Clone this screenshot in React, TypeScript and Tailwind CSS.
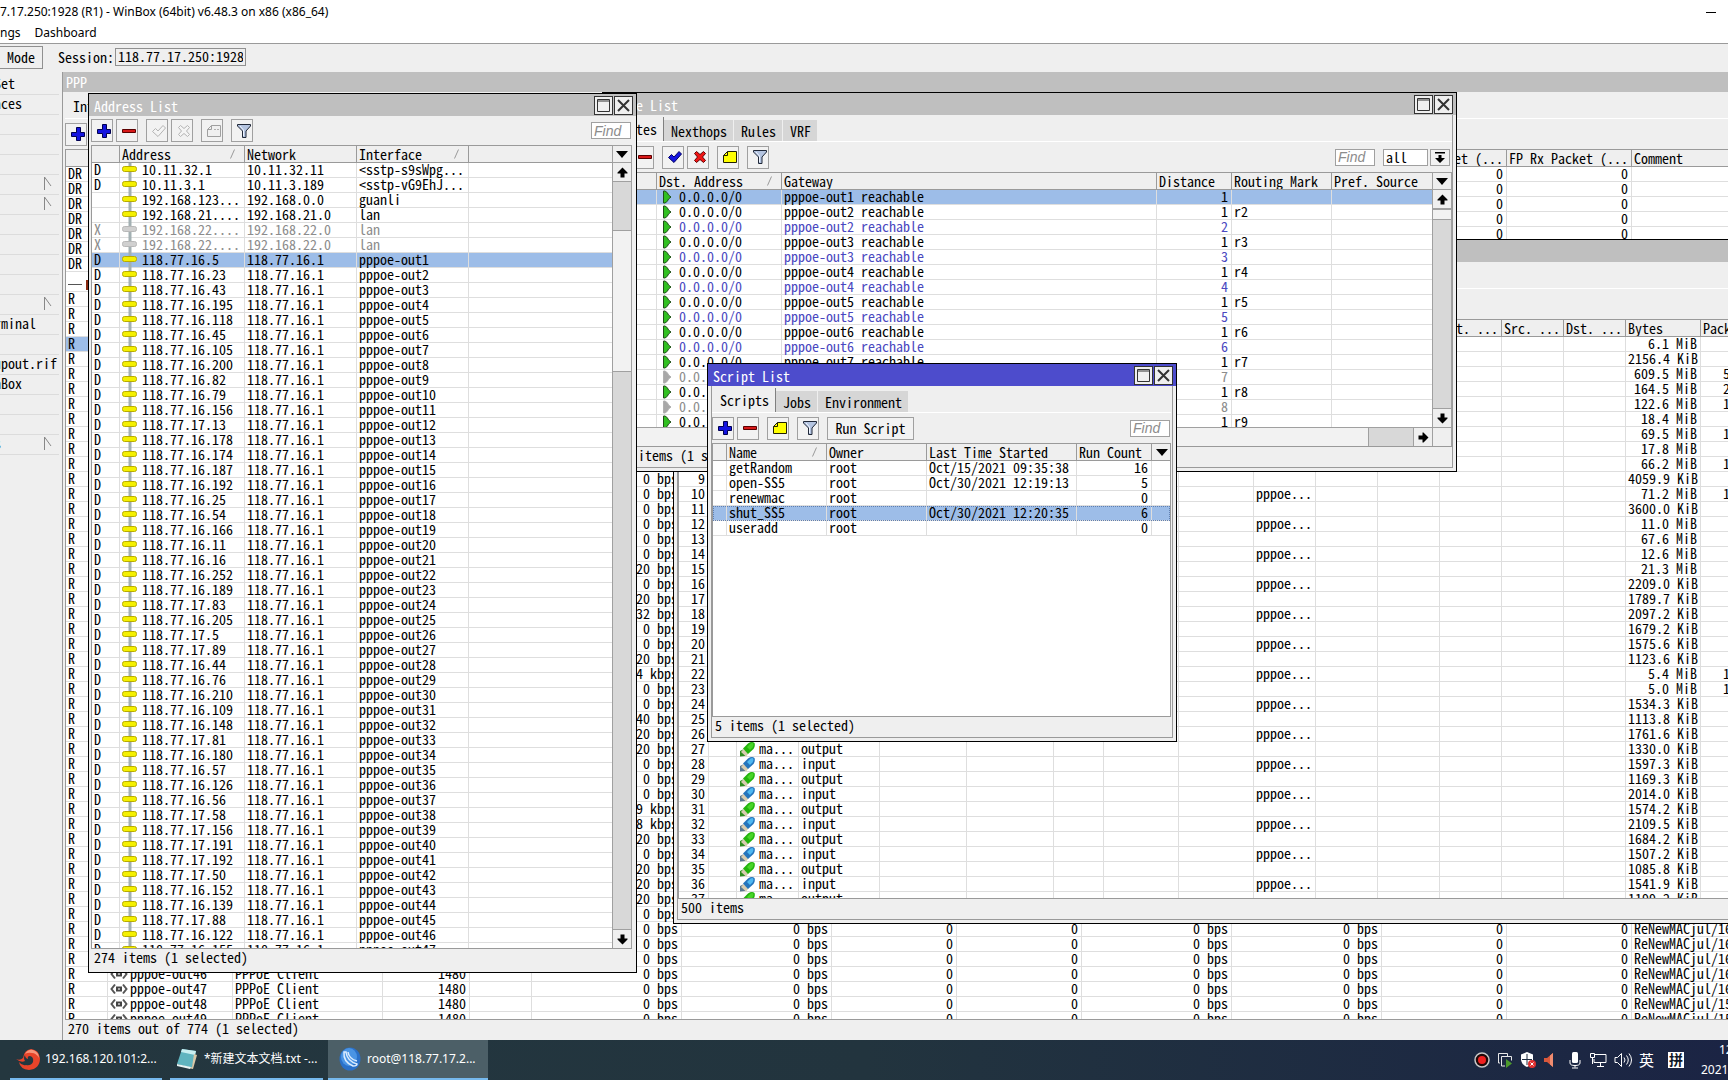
import React from 'react'
import clsx from 'clsx'

type Column = {
  label?: string
  width?: string
  align?: 'right'
  sorted?: boolean
}

type Row = {
  cells: React.ReactNode[]
  className?: string
  selected?: boolean
}

const addressHosts = [
  '16.5', '16.23', '16.43', '16.195', '16.118', '16.45', '16.105', '16.200', '16.82', '16.79',
  '16.156', '17.13', '16.178', '16.174', '16.187', '16.192', '16.25', '16.54', '16.166', '16.11',
  '16.16', '16.252', '16.189', '17.83', '16.205', '17.5', '17.89', '16.44', '16.76', '16.210',
  '16.109', '16.148', '17.81', '16.180', '16.57', '16.126', '16.56', '17.58', '17.156', '17.191',
  '17.192', '17.50', '16.152', '16.139', '17.88', '16.122', '16.155',
]

const ruleBytes = [
  '6.1 MiB', '2156.4 KiB', '609.5 MiB', '164.5 MiB', '122.6 MiB', '18.4 MiB', '69.5 MiB', '17.8 MiB',
  '66.2 MiB', '4059.9 KiB', '71.2 MiB', '3600.0 KiB', '11.0 MiB', '67.6 MiB', '12.6 MiB', '21.3 MiB',
  '2209.0 KiB', '1789.7 KiB', '2097.2 KiB', '1679.2 KiB', '1575.6 KiB', '1123.6 KiB', '5.4 MiB',
  '5.0 MiB', '1534.3 KiB', '1113.8 KiB', '1761.6 KiB', '1330.0 KiB', '1597.3 KiB', '1169.3 KiB',
  '2014.0 KiB', '1574.2 KiB', '2109.5 KiB', '1684.2 KiB', '1507.2 KiB', '1085.8 KiB', '1541.9 KiB',
  '1199.2 KiB',
]

const rulePackets: Record<number, string> = { 2: '5', 3: '2', 4: '1', 6: '1', 8: '1', 10: '1', 22: '1', 23: '1' }

const txRates: Record<number, string> = {
  19: '20 bps', 21: '20 bps', 22: '32 bps', 25: '20 bps', 26: '4 kbps', 29: '40 bps', 30: '20 bps',
  31: '20 bps', 35: '9 kbps', 36: '8 kbps', 37: '20 bps', 39: '20 bps', 40: '20 bps', 41: '20 bps',
}

/* ---------- icons ---------- */

const PlusIcon = () => (
  <svg width="16" height="16" viewBox="0 0 16 16">
    <path d="M6.500 1.500h4v5h4v4h-4v4h-4v-4h-5v-4h5z" fill="#1414e0" stroke="#000050" />
  </svg>
)

const MinusIcon = () => (
  <svg width="16" height="16" viewBox="0 0 16 16">
    <path d="M1.500 6.500h13v3h-13z" fill="#d81818" stroke="#5a0000" />
  </svg>
)

const CheckIcon = ({ off }: { off?: boolean }) => (
  <svg width="16" height="16" viewBox="0 0 16 16">
    <path d="M1.500 8.500l3-3 2.500 2.500 5-5.500 2.500 2.500-7.500 8.500z" fill={off ? '#f4f4f4' : '#1414e0'} stroke={off ? '#b4b4b4' : '#000060'} />
  </svg>
)

const CrossIcon = ({ off }: { off?: boolean }) => (
  <svg width="16" height="16" viewBox="0 0 16 16">
    <path
      d="M2.500 4.500l2-2L8 5.500l3.500-3 2 2L10.500 8l3 3.500-2 2L8 10.500l-3.500 3-2-2L5.500 8z"
      fill={off ? '#f4f4f4' : '#f01414'}
      stroke={off ? '#b4b4b4' : '#600000'}
    />
  </svg>
)

const NoteIcon = ({ off }: { off?: boolean }) => (
  <svg width="16" height="16" viewBox="0 0 16 16">
    <path d="M5.500 2.500h9v11h-13v-7z" fill={off ? '#f0f0f0' : '#ffff00'} stroke={off ? '#a0a0a0' : '#202000'} />
    <path d="M5.500 2.500v4h-4" fill="none" stroke={off ? '#a0a0a0' : '#202000'} />
    {off && <path d="M8 6.500h2m1 0h2" stroke="#b0b0b0" />}
  </svg>
)

const FunnelIcon = () => (
  <svg width="16" height="16" viewBox="0 0 16 16">
    <path d="M1.500 1.500h13v1.500L10 8v6.500H6.500V8L1.500 3z" fill="#b4c4e0" stroke="#202838" />
    <path d="M4 3l3.500 4v6" fill="none" stroke="#eef4ff" />
  </svg>
)

const AddressIcon = ({ off }: { off?: boolean }) => (
  <svg className="block shrink-0" width="16" height="15" viewBox="0 0 16 15">
    <path d="M6.500 0h3v15h-3z" fill="#a3b0b3" />
    <rect x=".5" y="3.500" width="14" height="5" rx="2" fill={off ? '#d0d0d0' : '#f4f000'} stroke={off ? '#b8b8b8' : '#b8ac00'} />
  </svg>
)

const RouteIcon = ({ off }: { off?: boolean }) => (
  <svg className="block shrink-0" width="10" height="14" viewBox="0 0 10 14">
    <path d="M.5 1v12h1.500Q5 11.500 5.500 9L8 7 5.500 5Q5 2.500 2 1z" fill={off ? '#a8a8a8' : '#30c020'} stroke={off ? '#b0b0b0' : '#205018'} />
  </svg>
)

const MarkIcon = ({ blue }: { blue?: boolean }) => (
  <svg className="block shrink-0" width="16" height="15" viewBox="0 0 16 15">
    <path d="M1 9l3-1.500 4 4L6 14l-5 .5z" fill={blue ? '#5a7890' : '#2e8c20'} />
    <path d="M2 10l2.500-3 5 4.500-2.500 3z" fill="#d8ccb0" />
    <path d="M4 6.500L9 1.500Q13-1 15.500 1q1 3-1 6L9 12z" fill={blue ? '#2474bc' : '#22b40c'} />
    <path d="M8 5L11.500 1.500Q14 .5 14.500 2q0 2-1 3.500L11 8z" fill={blue ? '#50b8f0' : '#48d428'} />
  </svg>
)

const InterfaceIcon = () => (
  <svg className="block shrink-0" width="18" height="14" viewBox="0 0 18 14">
    <path d="M5 2.500L1.500 7 5 11.500M13 2.500L16.500 7 13 11.500" fill="none" stroke="#555" strokeWidth="2" />
    <path d="M6 4.500h6v5H6z" fill="#444" />
    <path d="M8 6h2v2H8z" fill="#aaa" />
  </svg>
)

const ArrowGlyph = ({ d }: { d: string }) => (
  <svg width="11" height="11" viewBox="0 0 11 11">
    <path d={d} fill="#000" />
  </svg>
)

const UP = 'M5.500 0.500L10.500 5.500V6.500H7.500V10.500H3.500V6.500H.5V5.500z'
const DOWN = 'M5.500 10.500L10.500 5.500V4.500H7.500V.5H3.500V4.500H.5V5.500z'
const RIGHT = 'M10.500 5.500L5.500 .5H4.500V3.500H.5V7.500H4.500V10.500H5.500z'

/* ---------- window parts ---------- */

function ToolButton({ label, className, children }: { label: string; className?: string; children: React.ReactNode }) {
  return (
    <button
      aria-label={label}
      className={clsx('flex h-[23px] w-[22px] items-center justify-center border border-[#a0a0a0] bg-[#f2f2f2] pl-[3px]', className)}
    >
      {children}
    </button>
  )
}

function FindBox() {
  return (
    <input
      aria-label="Find"
      placeholder="Find"
      className="h-[17px] w-10 border border-[#a0a0a0] bg-white px-0.5 font-['Liberation_Sans',sans-serif] text-sm leading-[14px] italic placeholder:text-[#8c8c8c]"
    />
  )
}

function Tabs({ items }: { items: string[] }) {
  return (
    <div className="flex h-[27px] shrink-0 items-end border-b border-white px-px">
      {items.map((item, i) => (
        <button
          key={item}
          className={clsx(
            'pr-1.5 pl-[7px]',
            i === 0 ? 'h-6 border-r border-[#808080] bg-[#efefef]' : 'h-[21px] border-r border-[#efefef] bg-[#d6d6d6]',
          )}
        >
          {item}
        </button>
      ))}
    </div>
  )
}

function TitleBar({ title, active }: { title: string; active?: boolean }) {
  return (
    <div className={clsx('flex h-[22px] shrink-0 items-center gap-px pr-[3px] pl-[5px] text-white', active ? 'bg-[#4d4ccc]' : 'bg-[#bfbfbf]')}>
      <span className="flex-1 pt-0.5">{title}</span>
      <button aria-label="Maximize" className="flex h-[19px] w-[19px] items-center justify-center border border-[#333] bg-[#efefef]">
        <svg width="13" height="13" viewBox="0 0 13 13">
          <path d="M.5 .5h12v12H.5zM.5 2h12" fill="none" stroke="#333" />
        </svg>
      </button>
      <button aria-label="Close" className="flex h-[19px] w-[19px] items-center justify-center border border-[#333] bg-[#efefef]">
        <svg width="13" height="13" viewBox="0 0 13 13">
          <path d="M1 1l11 11M12 1L1 12" stroke="#333" strokeWidth="2" />
        </svg>
      </button>
    </div>
  )
}

function StatusBar({ children }: { children: React.ReactNode }) {
  return <div className="h-[21px] shrink-0 border-t border-[#9a9a9a] bg-[#efefef] pl-[3px] leading-4">{children}</div>
}

function VScroll({ before, thumb, className }: { before: string; thumb: string; className?: string }) {
  return (
    <div className={clsx('flex w-5 shrink-0 flex-col border-x border-[#a0a0a0] bg-[#d8d8d8]', className)}>
      <button aria-label="Columns" className="flex h-[18px] shrink-0 items-center justify-center border-y border-[#a0a0a0] bg-[#efefef]">
        <svg width="12" height="7" viewBox="0 0 12 7">
          <path d="M0 0h12L6 7z" />
        </svg>
      </button>
      <button aria-label="Scroll up" className="flex h-[19px] shrink-0 items-center justify-center border-b border-[#a0a0a0] bg-[#efefef]">
        <ArrowGlyph d={UP} />
      </button>
      <div className={clsx('shrink-0', before)} />
      <div className={clsx('shrink-0 border-y border-[#a0a0a0] bg-[#f2f2f2]', thumb)} />
      <div className="flex-1" />
      <button aria-label="Scroll down" className="flex h-[19px] shrink-0 items-center justify-center border-t border-[#a0a0a0] bg-[#efefef]">
        <ArrowGlyph d={DOWN} />
      </button>
    </div>
  )
}

function Grid({ columns, rows }: { columns: Column[]; rows: Row[] }) {
  return (
    <div className="min-w-0 flex-1 overflow-hidden border-l border-[#9a9a9a] bg-white">
      <table className="w-full table-fixed border-separate border-spacing-0">
        <colgroup>
          {columns.map((c, i) => (
            <col key={i} className={c.width} />
          ))}
        </colgroup>
        <thead>
          <tr>
            {columns.map((c, i) => (
              <th
                key={i}
                className={clsx(
                  'h-[18px] overflow-hidden border-y border-[#9a9a9a] bg-[#efefef] p-0 pl-0.5 text-left leading-4 font-normal whitespace-nowrap',
                  i < columns.length - 1 && 'border-r',
                )}
              >
                <span className="flex items-center justify-between">
                  {c.label}
                  {c.sorted && (
                    <svg className="mr-2" width="6" height="10" viewBox="0 0 6 10">
                      <path d="M.5 9.500l4-9" stroke="#999" />
                    </svg>
                  )}
                </span>
              </th>
            ))}
          </tr>
        </thead>
        <tbody>
          {rows.map((row, r) => (
            <tr key={r} className={clsx(row.className, row.selected && 'bg-[#9dbde8]')}>
              {row.cells.map((cell, i) => (
                <td
                  key={i}
                  colSpan={row.cells.length === 1 ? columns.length : undefined}
                  className={clsx(
                    'h-[15px] border-b border-[#dedede] p-0 pr-[3px] pl-0.5 align-top leading-3 whitespace-nowrap',
                    i < columns.length - 1 && 'border-r',
                    columns[i].align === 'right' && 'text-right',
                  )}
                >
                  {cell}
                </td>
              ))}
            </tr>
          ))}
        </tbody>
      </table>
    </div>
  )
}

const WithIcon = ({ icon, children }: { icon: React.ReactNode; children: React.ReactNode }) => (
  <span className="flex h-[14px] items-start">
    {icon}
    {children}
  </span>
)

/* ---------- windows ---------- */

function PppWindow() {
  const columns: Column[] = [
    { width: 'w-[42px]' },
    { width: 'w-[125px]', label: 'Name' },
    { width: 'w-[150px]', label: 'Type' },
    { width: 'w-[87px]', label: 'Actual MTU', align: 'right' },
    { width: 'w-[62px]', label: 'L2 MTU' },
    { width: 'w-[150px]', label: 'Tx', align: 'right' },
    { width: 'w-[150px]', label: 'Rx', align: 'right' },
    { width: 'w-[125px]', label: 'Tx Packet (...', align: 'right' },
    { width: 'w-[125px]', label: 'Rx Packet (...', align: 'right' },
    { width: 'w-[150px]', label: 'FP Tx', align: 'right' },
    { width: 'w-[150px]', label: 'FP Rx', align: 'right' },
    { width: 'w-[125px]', label: 'FP Tx Packet (...', align: 'right' },
    { width: 'w-[125px]', label: 'FP Rx Packet (...', align: 'right' },
    { label: 'Comment' },
  ]
  const dynamic: Row[] = Array.from({ length: 7 }, () => ({
    cells: ['DR', '', '', '', '', '', '', '0', '0', '', '', '0', '0', ''],
  }))
  const clients: Row[] = Array.from({ length: 49 }, (_, i) => ({
    selected: i === 3,
    cells: [
      'R',
      <WithIcon icon={<InterfaceIcon />}>
        <span className="pl-0.5">pppoe-out{i + 1}</span>
      </WithIcon>,
      'PPPoE Client',
      '1480',
      '',
      txRates[i + 1] ?? '0 bps',
      '0 bps',
      '0',
      '0',
      '0 bps',
      '0 bps',
      '0',
      '0',
      i < 47 ? 'ReNewMACjul/16' : 'ReNewMACjul/15',
    ],
  }))

  return (
    <section className="flex h-full flex-col border-l border-[#9a9a9a]">
      <h2 className="h-5 shrink-0 bg-[#bfbfbf] pl-[3px] leading-5 text-white">PPP</h2>
      <div className="flex min-h-0 flex-1 flex-col pl-0.5">
        <div className="h-[27px] shrink-0 border-b border-white pt-[7px] pl-2">Interface</div>
        <div className="flex h-[30px] shrink-0 items-center">
          <ToolButton label="Add interface">
            <PlusIcon />
          </ToolButton>
        </div>
        <div className="flex min-h-0 flex-1">
          <Grid
            columns={columns}
            rows={[
              ...dynamic,
              {
                cells: [
                  <span className="flex h-[19px] items-center gap-1 pt-1.5">
                    <span className="h-px w-3.5 bg-[#555]" />
                    <span className="h-2.5 w-2 bg-[#8a2a10]" />
                  </span>,
                ],
              },
              ...clients,
            ]}
          />
        </div>
        <StatusBar>270 items out of 774 (1 selected)</StatusBar>
      </div>
    </section>
  )
}

function FirewallWindow() {
  const columns: Column[] = [
    { width: 'w-[30px]', label: '#', align: 'right' },
    { width: 'w-[28px]' },
    { width: 'w-[62px]', label: 'Action' },
    { width: 'w-[81px]', label: 'Chain' },
    { width: 'w-[87px]', label: 'Src. Address' },
    { width: 'w-[87px]', label: 'Dst. Address' },
    { width: 'w-[50px]', label: 'Proto...' },
    { width: 'w-[75px]', label: 'Src. Port' },
    { width: 'w-[75px]', label: 'Dst. Port' },
    { width: 'w-[62px]', label: 'In. ...' },
    { width: 'w-[62px]', label: 'Out. ...' },
    { width: 'w-[62px]', label: 'In. ...' },
    { width: 'w-[62px]', label: 'Out. ...' },
    { width: 'w-[62px]', label: 'Src. ...' },
    { width: 'w-[62px]', label: 'Dst. ...' },
    { width: 'w-[75px]', label: 'Bytes', align: 'right' },
    { label: 'Packets' },
  ]
  const rows: Row[] = ruleBytes.map((bytes, i) => {
    const input = i % 2 === 0
    return {
      cells: [
        i,
        '',
        <WithIcon icon={<MarkIcon blue={input} />}>
          <span className="pl-1">ma...</span>
        </WithIcon>,
        input ? 'input' : 'output',
        '', '', '', '', '',
        input ? 'pppoe...' : '',
        '', '', '', '', '',
        bytes,
        <span className="pl-5">{rulePackets[i]}</span>,
      ],
    }
  })

  return (
    <section className="absolute top-[167px] right-0 left-[611px] flex h-[685px] flex-col border-y border-l border-black bg-[#efefef]">
      <h2 className="h-[22px] shrink-0 bg-[#bfbfbf] pt-1 pl-[5px] text-white">Firewall</h2>
      <div className="flex min-h-0 flex-1 flex-col pb-[3px] pl-[3px]">
        <div className="flex min-h-0 flex-1 flex-col border-b border-l border-[#9a9a9a]">
          <div className="h-[27px] shrink-0 border-b border-white" />
          <div className="h-[30px] shrink-0" />
          <div className="flex min-h-0 flex-1">
            <Grid columns={columns} rows={rows} />
          </div>
          <StatusBar>500 items</StatusBar>
        </div>
      </div>
    </section>
  )
}

function RouteWindow() {
  const columns: Column[] = [
    { width: 'w-[49px]' },
    { width: 'w-[125px]', label: 'Dst. Address', sorted: true },
    { label: 'Gateway' },
    { width: 'w-[75px]', label: 'Distance', align: 'right' },
    { width: 'w-[100px]', label: 'Routing Mark' },
    { width: 'w-[100px]', label: 'Pref. Source' },
  ]
  const rows: Row[] = Array.from({ length: 16 }, (_, i) => {
    const n = Math.floor(i / 2) + (i % 2) + 1
    const backup = i > 0 && i % 2 === 0
    const off = backup && n >= 7
    return {
      selected: i === 0,
      className: clsx(backup && (off ? 'text-[#8c8c8c]' : 'text-[#4a48c0]')),
      cells: [
        '',
        <span className="block pl-1">
          <WithIcon icon={<RouteIcon off={off} />}>
            <span className="pl-1.5">0.0.0.0/0</span>
          </WithIcon>
        </span>,
        `pppoe-out${n} ${off ? 'unreachable' : 'reachable'}`,
        backup ? n : 1,
        i % 2 === 1 ? `r${n}` : '',
        '',
      ],
    }
  })

  return (
    <section className="absolute top-5 left-[540px] flex h-[380px] w-[855px] flex-col border border-black bg-[#efefef]">
      <TitleBar title="Route List" />
      <div className="flex min-h-0 flex-1 flex-col px-[3px] pb-[3px]">
        <div className="flex min-h-0 flex-1 flex-col border-x border-b border-[#9a9a9a]">
          <Tabs items={['Routes', 'Nexthops', 'Rules', 'VRF']} />
          <div className="flex h-[30px] shrink-0 items-center">
            <ToolButton label="Add route"><PlusIcon /></ToolButton>
            <ToolButton label="Remove route" className="ml-[3px]"><MinusIcon /></ToolButton>
            <ToolButton label="Enable" className="ml-2"><CheckIcon /></ToolButton>
            <ToolButton label="Disable" className="ml-[3px]"><CrossIcon /></ToolButton>
            <ToolButton label="Comment" className="ml-2"><NoteIcon /></ToolButton>
            <ToolButton label="Filter" className="ml-2"><FunnelIcon /></ToolButton>
            <div className="ml-auto flex items-center pr-0.5">
              <FindBox />
              <select aria-label="Routing table" className="ml-2 h-[17px] w-[45px] appearance-none border border-[#a0a0a0] bg-white pl-0.5 leading-[14px]">
                <option>all</option>
              </select>
              <button aria-label="Open list" className="ml-0.5 flex h-[17px] w-5 items-center justify-center border border-[#a0a0a0] bg-[#f2f2f2]">
                <svg width="10" height="11" viewBox="0 0 10 11">
                  <path d="M0 0h10v1.500H0zM3.500 3h3v3H10l-5 5-5-5h3.500z" />
                </svg>
              </button>
            </div>
          </div>
          <div className="flex min-h-0 flex-1">
            <div className="flex min-w-0 flex-1 flex-col">
              <div className="flex min-h-0 flex-1">
                <Grid columns={columns} rows={rows} />
              </div>
              <div className="flex h-[19px] shrink-0 border-t border-[#a0a0a0] bg-[#d8d8d8]">
                <div className="flex-1 border-r border-[#a0a0a0] bg-[#f2f2f2]" />
                <div className="w-11" />
                <button aria-label="Scroll right" className="flex w-[19px] items-center justify-center border-l border-[#a0a0a0] bg-[#efefef]">
                  <ArrowGlyph d={RIGHT} />
                </button>
              </div>
            </div>
            <div className="flex flex-col">
              <VScroll before="hidden" thumb="h-[11px]" className="flex-1" />
              <div className="h-[19px] shrink-0 border-x border-t border-[#a0a0a0]" />
            </div>
          </div>
          <StatusBar>548 items (1 selected)</StatusBar>
        </div>
      </div>
    </section>
  )
}

function AddressWindow() {
  const columns: Column[] = [
    { width: 'w-[28px]' },
    { width: 'w-[125px]', label: 'Address', sorted: true },
    { width: 'w-[112px]', label: 'Network' },
    { width: 'w-[112px]', label: 'Interface', sorted: true },
    {},
  ]
  const address = (flag: string, addr: string, network: string, iface: string): Row => ({
    className: clsx(flag === 'X' && 'text-[#8c8c8c]'),
    selected: iface === 'pppoe-out1',
    cells: [
      flag,
      <WithIcon icon={<AddressIcon off={flag === 'X'} />}>
        <span className="pl-1">{addr}</span>
      </WithIcon>,
      network,
      iface,
      '',
    ],
  })
  const rows = [
    address('D', '10.11.32.1', '10.11.32.11', '<sstp-s9sWpg...'),
    address('D', '10.11.3.1', '10.11.3.189', '<sstp-vG9EhJ...'),
    address('', '192.168.123...', '192.168.0.0', 'guanli'),
    address('', '192.168.21....', '192.168.21.0', 'lan'),
    address('X', '192.168.22....', '192.168.22.0', 'lan'),
    address('X', '192.168.22....', '192.168.22.0', 'lan'),
    ...addressHosts.map((host, i) => address('D', `118.77.${host}`, '118.77.16.1', `pppoe-out${i + 1}`)),
  ]

  return (
    <section className="absolute top-[21px] left-[26px] flex h-[880px] w-[549px] flex-col border border-black bg-[#efefef]">
      <TitleBar title="Address List" />
      <div className="flex min-h-0 flex-1 flex-col pr-1 pb-[3px] pl-0.5">
        <div className="flex h-[29px] shrink-0 items-center">
          <ToolButton label="Add address"><PlusIcon /></ToolButton>
          <ToolButton label="Remove address" className="ml-[3px]"><MinusIcon /></ToolButton>
          <ToolButton label="Enable" className="ml-2"><CheckIcon off /></ToolButton>
          <ToolButton label="Disable" className="ml-[3px]"><CrossIcon off /></ToolButton>
          <ToolButton label="Comment" className="ml-2"><NoteIcon off /></ToolButton>
          <ToolButton label="Filter" className="ml-2"><FunnelIcon /></ToolButton>
          <div className="ml-auto flex pr-px">
            <FindBox />
          </div>
        </div>
        <div className="flex min-h-0 flex-1">
          <Grid columns={columns} rows={rows} />
          <VScroll before="h-12" thumb="h-[142px]" />
        </div>
        <StatusBar>274 items (1 selected)</StatusBar>
      </div>
    </section>
  )
}

function ScriptWindow() {
  const columns: Column[] = [
    { width: 'w-[14px]' },
    { width: 'w-[100px]', label: 'Name', sorted: true },
    { width: 'w-[100px]', label: 'Owner' },
    { label: 'Last Time Started' },
    { width: 'w-[75px]', label: 'Run Count', align: 'right' },
    { width: 'w-[18px]' },
  ]
  const scripts = [
    ['getRandom', 'Oct/15/2021 09:35:38', '16'],
    ['open-SS5', 'Oct/30/2021 12:19:13', '5'],
    ['renewmac', '', '0'],
    ['shut_SS5', 'Oct/30/2021 12:20:35', '6'],
    ['useradd', '', '0'],
  ]
  const rows: Row[] = scripts.map(([name, started, count]) => ({
    selected: name === 'shut_SS5',
    className: clsx(name === 'shut_SS5' && 'outline-1 -outline-offset-1 outline-[#5f7fb0] outline-dotted'),
    cells: ['', name, 'root', started, count, ''],
  }))

  return (
    <section className="absolute top-[291px] left-[645px] flex h-[379px] w-[470px] flex-col border border-black bg-[#efefef]">
      <TitleBar title="Script List" active />
      <div className="flex min-h-0 flex-1 flex-col px-[3px] pb-[3px]">
        <div className="flex min-h-0 flex-1 flex-col border-x border-b border-[#9a9a9a] pr-px">
          <Tabs items={['Scripts', 'Jobs', 'Environment']} />
          <div className="flex h-[30px] shrink-0 items-center">
            <ToolButton label="Add script"><PlusIcon /></ToolButton>
            <ToolButton label="Remove script" className="ml-[3px]"><MinusIcon /></ToolButton>
            <ToolButton label="Comment" className="ml-2"><NoteIcon /></ToolButton>
            <ToolButton label="Filter" className="ml-2"><FunnelIcon /></ToolButton>
            <button className="ml-2 h-[23px] w-[87px] border border-[#a0a0a0] bg-[#f2f2f2]">Run Script</button>
            <div className="ml-auto flex pr-px">
              <FindBox />
            </div>
          </div>
          <div className="relative flex min-h-0 flex-1 border-r border-[#9a9a9a]">
            <Grid columns={columns} rows={rows} />
            <button aria-label="Columns" className="absolute top-1.5 right-0.5">
              <svg width="12" height="7" viewBox="0 0 12 7">
                <path d="M0 0h12L6 7z" />
              </svg>
            </button>
          </div>
          <StatusBar>5 items (1 selected)</StatusBar>
        </div>
      </div>
    </section>
  )
}

/* ---------- shell ---------- */

const menuRows: { text?: string; sub?: boolean }[] = [
  { text: 'Set' }, { text: 'aces' }, {}, {}, {}, { sub: true }, { sub: true }, {}, {}, {}, {}, { sub: true },
  { text: 'rminal' }, {}, { text: 'upout.rif' }, { text: 'nBox' }, {}, {}, { text: 's', sub: true },
]

function Sidebar() {
  return (
    <nav className="w-[62px] shrink-0 overflow-hidden pt-[3px] pr-[3px]">
      {menuRows.map((row, i) => (
        <div key={i} className="flex h-5 items-center justify-between border-b border-[#dcdcdc] pb-[3px]">
          <a href="#" className="-ml-1.5">
            {row.text}
          </a>
          {row.sub && (
            <svg className="mr-[7px] shrink-0" width="8" height="15" viewBox="0 0 8 15">
              <path d="M.5 14V1l6.500 9" fill="none" stroke="#888" />
            </svg>
          )}
        </div>
      ))}
    </nav>
  )
}

function Taskbar() {
  return (
    <footer className="flex h-10 shrink-0 items-stretch bg-linear-to-r from-[#24373f] via-[#22343e] to-[#1b2444] pl-2.5 font-['Noto_Sans','Noto_Sans_CJK_SC',sans-serif] text-xs text-white">
      <button className="flex w-[152px] items-center gap-1 border-b-2 border-[#76b9ed] pl-[5px]">
        <svg width="26" height="24" viewBox="0 0 26 24">
          <path d="M1 12q4 2 7-1Q9 3 16 2q8 1 9 9 0 11-11 12-9-1-10-8 3 4 7 3 5 1 7-3 1-5-3-6-3 0-2 3-3-1-3-4-2 3 0 6-4 2-9-2z" fill="#e8442a" />
          <path d="M10 7q3-5 8-4 6 2 6 8-3-5-7-5-4-1-7 1z" fill="#f7957a" />
        </svg>
        192.168.120.101:2...
      </button>
      <button className="ml-2 flex w-[153px] items-center gap-1.5 border-b-2 border-[#76b9ed] pl-1.5">
        <svg width="22" height="22" viewBox="0 0 22 22">
          <path d="M6 1l14 2-4 17L1 16z" fill="#5fb4bf" />
          <path d="M6 1l14 2-1 4L5 4z" fill="#c8eef0" />
          <path d="M18 6l3 1-4 14-5-1 4-1z" fill="#d8c8a8" />
          <path d="M1 16l14 3-1 2L1 18z" fill="#e8f4f4" />
        </svg>
        *新建文本文档.txt -...
      </button>
      <button className="ml-[5px] flex w-40 items-center gap-1.5 border-b-2 border-[#76b9ed] bg-[#4c5f67] pl-[11px]">
        <svg width="22" height="24" viewBox="0 0 22 24">
          <ellipse cx="11" cy="12" rx="10.500" ry="11.500" fill="#2a70c8" />
          <ellipse cx="10" cy="10" rx="8" ry="9" fill="#4a94e4" />
          <path d="M5 5q-1 10 9 14 4 0 4-2Q8 14 7 5zM9 5q1 7 9 9" fill="none" stroke="#dcecff" strokeWidth="1.500" />
        </svg>
        root@118.77.17.2...
      </button>

      <div className="ml-auto flex items-center gap-[7px]">
        <svg width="16" height="16" viewBox="0 0 16 16">
          <circle cx="8" cy="8" r="7" fill="#200808" stroke="#c8c8c8" strokeWidth="1.500" />
          <circle cx="8" cy="8" r="4" fill="#f02020" />
        </svg>
        <svg width="16" height="16" viewBox="0 0 16 16">
          <path d="M3 11H1.500V1.500h9V4M4.500 14V4.500h10v4M4.500 14H8" fill="none" stroke="#e8e8e8" />
          <path d="M9 7l6 4.500L9 16z" fill="#4c9a2c" />
        </svg>
        <svg width="16" height="16" viewBox="0 0 16 16">
          <path d="M7 0l6 2.500V8q-1 5-6 7-5-2-6-7V2.500z" fill="#fff" />
          <path d="M7 2v11M2 7.500h10" stroke="#1e2c40" />
          <circle cx="12" cy="12" r="4" fill="#e03030" />
          <path d="M10.500 10.500l3 3m0-3l-3 3" stroke="#fff" />
        </svg>
        <svg width="14" height="16" viewBox="0 0 14 16">
          <path d="M1 6h3l6-5v14l-6-5H1z" fill="#d8583c" />
          <path d="M10 1v14l-3-2.500v-9z" fill="#f08c70" />
        </svg>
        <svg className="ml-1" width="14" height="18" viewBox="0 0 14 18">
          <rect x="4" y="1" width="6" height="11" rx="1.500" fill="#fff" />
          <path d="M2 9v3q0 2.500 5 2.500t5-2.500V9M7 14v2.500M4 17h6" fill="none" stroke="#fff" />
        </svg>
        <svg width="18" height="16" viewBox="0 0 18 16">
          <path d="M6 2.500h11v8H5V7M8 14.500h7M11.500 10.500v4M1.500 1.500h4v4h-4zM3.500 5.500V12" fill="none" stroke="#fff" />
        </svg>
        <svg width="18" height="16" viewBox="0 0 18 16">
          <path d="M1 5.500h2.500l4-4v13l-4-4H1zM10 5.500q2 2.500 0 5M12.500 3.500q3.500 4.500 0 9M15 1.500q5 6.500 0 13" fill="none" stroke="#fff" />
        </svg>
        <span className="w-4 text-[15px]">英</span>
        <span className="ml-1.5 flex h-4 w-4 items-center justify-center bg-white text-sm font-bold text-[#101828]">拼</span>
        <time className="flex w-[37px] flex-col items-end overflow-hidden leading-5">
          <span className="w-[9px] overflow-hidden">12</span>
          <span className="w-[27px] overflow-hidden">2021</span>
        </time>
      </div>
    </footer>
  )
}

export default function App() {
  return (
    <div className="flex h-screen flex-col overflow-hidden bg-[#efefef] font-['Noto_Sans_Mono_CJK_SC','Liberation_Mono',monospace] text-sm leading-[14px] text-black">
      <header className="shrink-0 bg-white font-['Noto_Sans',sans-serif] text-xs">
        <div className="flex h-6 items-center justify-between pr-3">
          <h1>7.17.250:1928 (R1) - WinBox (64bit) v6.48.3 on x86 (x86_64)</h1>
          <button aria-label="Minimize" className="flex h-5 w-2.5 items-center">
            <span className="h-px w-full bg-black" />
          </button>
        </div>
        <div className="flex h-[19px] items-center gap-3.5 pb-0.5">
          <a href="#">ngs</a>
          <a href="#">Dashboard</a>
        </div>
      </header>

      <div className="flex h-[29px] shrink-0 items-center overflow-hidden border-t border-[#9a9a9a] pb-0.5">
        <button className="-ml-2 h-[23px] border border-[#909090] pr-[7px]">e Mode</button>
        <label htmlFor="session" className="ml-[15px]">
          Session:
        </label>
        <input id="session" readOnly value="118.77.17.250:1928" className="ml-px h-[18px] w-[131px] border border-[#909090] px-0.5 pb-0.5 leading-[14px]" />
      </div>

      <div className="flex min-h-0 flex-1">
        <Sidebar />
        <main className="relative min-w-0 flex-1 overflow-hidden">
          <PppWindow />
          <FirewallWindow />
          <RouteWindow />
          <AddressWindow />
          <ScriptWindow />
        </main>
      </div>

      <Taskbar />
    </div>
  )
}
